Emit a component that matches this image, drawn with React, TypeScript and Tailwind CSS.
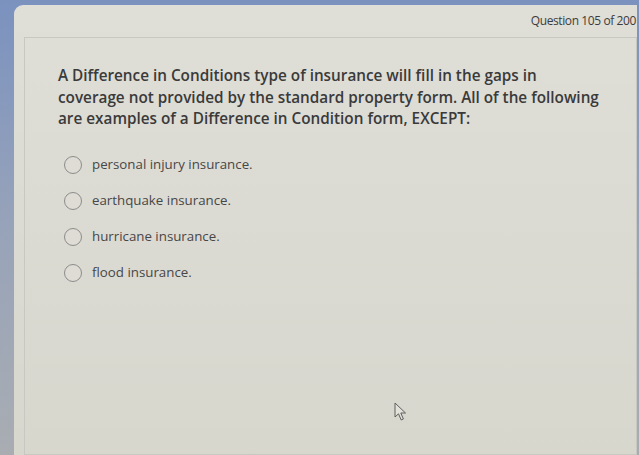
import React from 'react';

// Quiz question card - photographed exam screen

const OPTIONS = [
  'personal injury insurance.',
  'earthquake insurance.',
  'hurricane insurance.',
  'flood insurance.',
];

function Radio() {
  return (
    <span className="block h-[18px] w-[18px] shrink-0 rounded-full border-[1.5px] border-[#8c8c8a] bg-[#dedcd5]" />
  );
}

function Cursor() {
  return (
    <svg width="14" height="20" viewBox="0 0 14 20" className="absolute left-[394px] top-[402px]">
      <path
        d="M1 1 L1 15 L4.5 11.8 L7.2 18 L9.4 17 L6.8 11 L11.5 11 Z"
        fill="#e2e1da"
        stroke="#5e5e5c"
        strokeWidth="1"
        strokeLinejoin="round"
      />
    </svg>
  );
}

export default function App() {
  return (
    <div
      className="relative h-[455px] w-[639px] overflow-hidden bg-linear-to-b from-[#7b92bf] via-[#97a3b9] to-[#a9adb2] pl-[14px] pr-[2px] pt-[5px]"
      style={{ fontFamily: '"Open Sans", "Noto Sans", sans-serif' }}
    >
      <div className="flex h-full flex-col rounded-tl-[9px] bg-linear-to-b from-[#dfded7] to-[#d8d7ce]">
        <div className="flex h-[32px] items-center justify-end pr-[1px] text-[12px] tracking-[-0.4px] text-[#3c3c3c]">
          Question 105 of 200
        </div>
        <div className="ml-[10px] flex-1 border border-[#c8c8c2] pl-[33px] pr-[10px] pt-[27px]">
          <p className="w-[546px] text-[15.3px] font-semibold leading-[21.5px] text-[#3a3a3a]">
            A Difference in Conditions type of insurance will fill in the gaps in coverage not provided
            by the standard property form. All of the following are examples of a Difference in
            Condition form, EXCEPT:
          </p>
          <div className="mt-[17px] flex flex-col">
            {OPTIONS.map((o) => (
              <div key={o} className="flex h-[36px] items-center gap-[10px] pl-[6px]">
                <Radio />
                <span className="text-[13.3px] text-[#474747]">{o}</span>
              </div>
            ))}
          </div>
        </div>
      </div>
      <Cursor />
    </div>
  );
}
